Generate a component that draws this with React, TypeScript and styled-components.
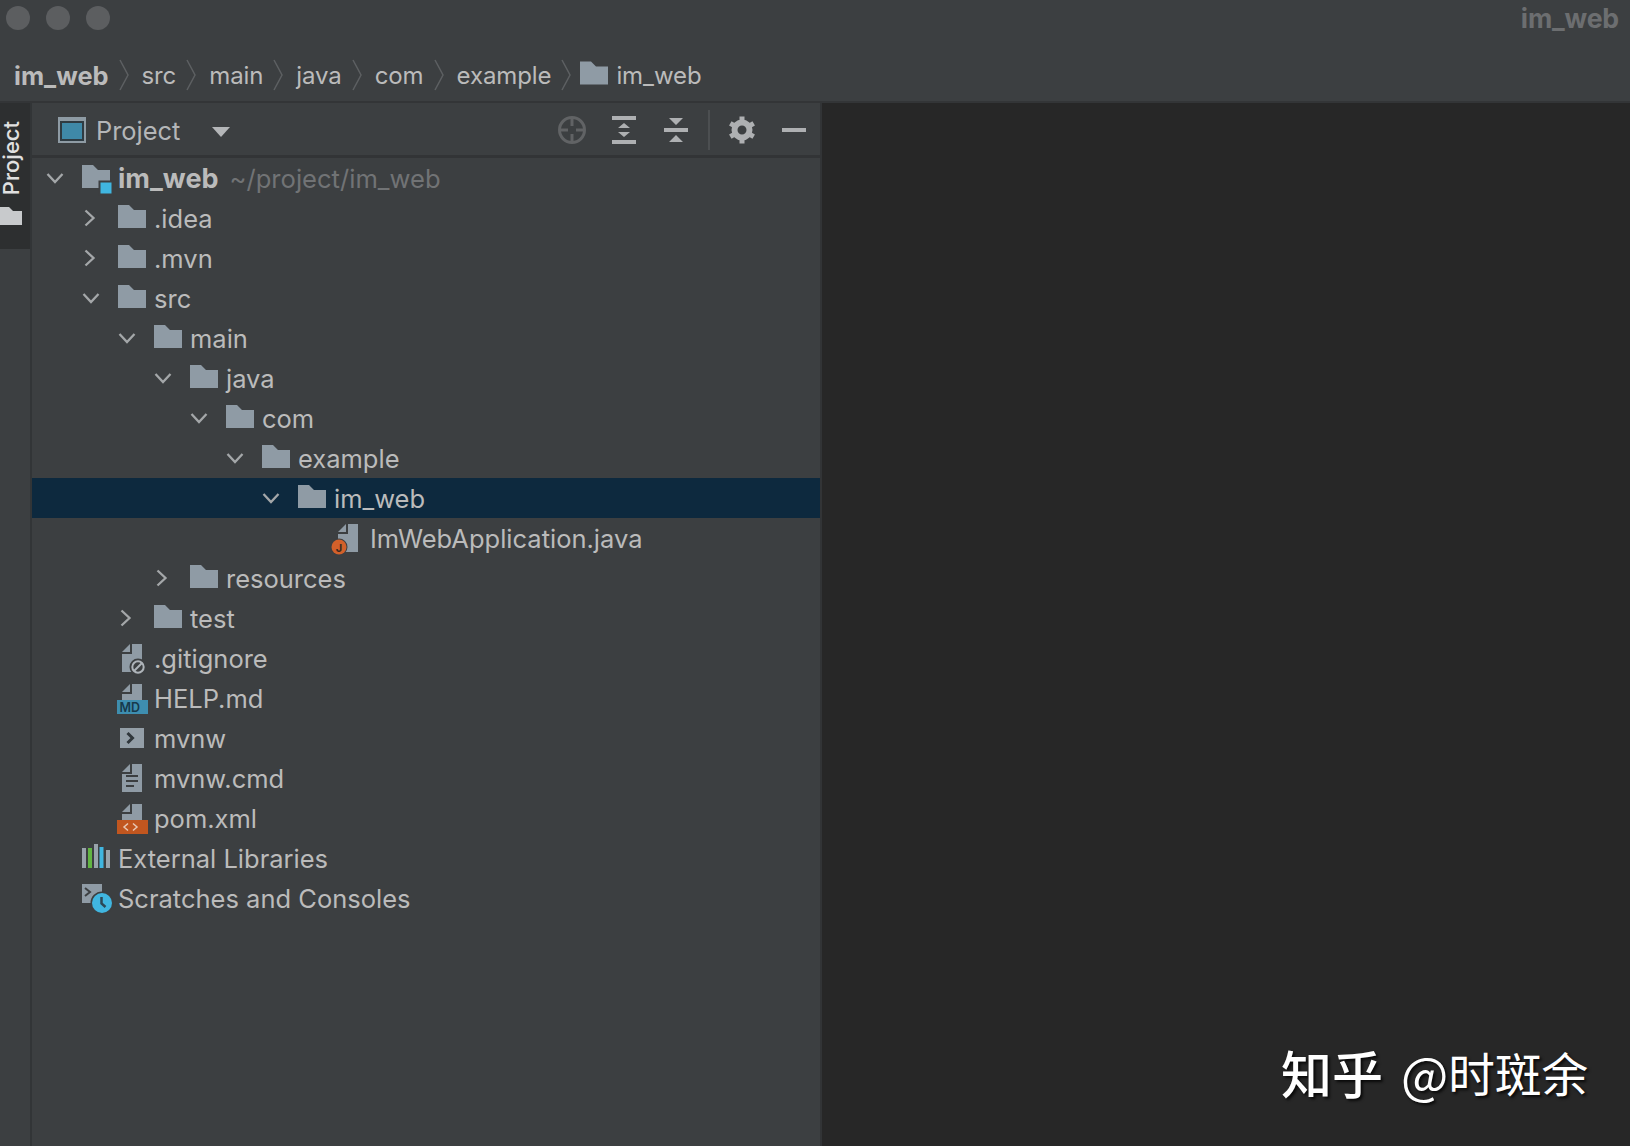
import React from "react";
import styled, { createGlobalStyle } from "styled-components";

const Global = createGlobalStyle`
  html, body { margin: 0; padding: 0; background: #272727; }
  body { font-family: Inter, "Liberation Sans", sans-serif; }
  #root { width: 1630px; height: 1146px; overflow: hidden; }
`;

const Win = styled.div`
  position: relative;
  width: 1630px;
  height: 1146px;
  display: flex;
  flex-direction: column;
  overflow: hidden;
  background: #272727;
  color: #bbbbbb;
`;
const Header = styled.header`
  height: 101px;
  flex: none;
  background: #3c3f41;
  border-bottom: 2px solid #333537;
  display: flex;
  flex-direction: column;
`;
const TitleRow = styled.div`
  height: 36px;
  display: flex;
  align-items: center;
  justify-content: space-between;
  padding: 0 11px 0 6px;
`;
const Lights = styled.div`
  display: flex;
  gap: 16px;
`;
const Light = styled.span`
  width: 24px;
  height: 24px;
  border-radius: 50%;
  background: #5c5e60;
`;
const WinTitle = styled.div`
  font-size: 26.7px;
  font-weight: 700;
  color: #6c6e70;
  letter-spacing: -0.2px;
`;
const Crumbs = styled.nav`
  flex: 1;
  display: flex;
  align-items: center;
  padding: 13px 0 0 14px;
  font-size: 24px;
  letter-spacing: -0.1px;
  color: #bbbbbb;
`;
const Crumb = styled.span`
  font-weight: 400;
`;
const RootCrumb = styled.span`
  font-size: 25.4px;
  font-weight: 700;
  letter-spacing: 0;
`;
const Sep = styled.svg`
  width: 11px;
  height: 32px;
  margin: 0 12px 0 10px;
  flex: none;
`;
const CrumbFolder = styled.svg`
  width: 28px;
  height: 24px;
  margin: -5px 8px 0 -4px;
  flex: none;
`;
const Body = styled.div`
  flex: 1;
  display: flex;
  min-height: 0;
`;
const Stripe = styled.aside`
  width: 30px;
  flex: none;
  background: #3c3f41;
  border-right: 2px solid #323537;
`;
const StripeBtn = styled.div`
  height: 146px;
  background: #2d2f30;
  display: flex;
  flex-direction: column;
  align-items: flex-start;
`;
const StripeLabel = styled.div`
  writing-mode: vertical-rl;
  transform: rotate(180deg);
  font-size: 22px;
  font-weight: 500;
  line-height: 20px;
  width: 20px;
  margin: 18px 0 0 1px;
  color: #e0e0e0;
`;
const StripeFolder = styled.svg`
  width: 22px;
  height: 18px;
  margin-top: 12px;
  display: block;
`;
const Panel = styled.section`
  width: 788px;
  flex: none;
  background: #3c3f41;
  border-right: 2px solid #323436;
  display: flex;
  flex-direction: column;
`;
const ToolBar = styled.div`
  height: 50px;
  flex: none;
  border-bottom: 3px solid #323436;
  display: flex;
  align-items: center;
  padding: 2px 0 0 25px;
`;
const ProjectGlyph = styled.svg`
  width: 30px;
  height: 28px;
  flex: none;
`;
const ToolLabel = styled.span`
  font-size: 25.4px;
  margin-left: 9px;
  color: #b4b6b8;
`;
const Drop = styled.svg`
  width: 18px;
  height: 10px;
  margin-left: 32px;
  margin-top: 3px;
`;
const ToolIcons = styled.div`
  margin-left: auto;
  display: flex;
  align-items: center;
  height: 100%;
  padding-right: 11px;
`;
const ToolIcon = styled.svg<{ $m?: number }>`
  width: 30px;
  height: 30px;
  margin-left: ${(p) => p.$m ?? 22}px;
  display: block;
`;
const ToolSep = styled.span`
  width: 2px;
  height: 40px;
  background: #4c4f51;
  margin: 0 17px 0 17px;
`;
const Tree = styled.div``;
const Row = styled.div<{ $depth: number; $sel?: boolean }>`
  height: 40px;
  display: flex;
  align-items: center;
  padding-left: ${(p) => 9 + p.$depth * 36}px;
  background: ${(p) => (p.$sel ? "#0d293e" : "transparent")};
`;
const Chev = styled.svg`
  width: 28px;
  height: 28px;
  flex: none;
  margin-right: 13px;
`;
const Blank = styled.span`
  width: 28px;
  flex: none;
  margin-right: 13px;
`;
const IconSlot = styled.svg`
  width: 32px;
  height: 36px;
  flex: none;
  margin-right: 4px;
  overflow: visible;
`;
const Name = styled.span<{ $bold?: boolean }>`
  font-size: ${(p) => (p.$bold ? 27 : 25.5)}px;
  font-weight: ${(p) => (p.$bold ? 700 : 400)};
  color: #bbbbbb;
  white-space: nowrap;
`;
const Hint = styled.span`
  font-size: 25.6px;
  color: #717375;
  margin-left: 11px;
  white-space: nowrap;
`;
const Editor = styled.main`
  flex: 1;
  background: #272727;
`;
const Mark = styled.div`
  position: absolute;
  left: 1281px;
  top: 1040px;
  display: flex;
  align-items: center;
  font-family: "Noto Sans CJK SC", sans-serif;
  font-size: 46.6px;
  line-height: 64px;
  color: #fff;
  white-space: pre;
  text-shadow: 2px 2px 3px rgba(0, 0, 0, 0.8);
`;
const MarkBrand = styled.span`
  font-size: 51px;
  font-weight: 500;
  margin-right: 18px;
`;
const MarkAt = styled.span`
  font-size: 50px;
`;

const FolderShape = ({ y = 0 }: { y?: number }) => (
  <path transform={`translate(0 ${y})`} d="M0 0h11l5 5h12v18H0z" fill="#8f9ba5" />
);
const Page = () => (
  <>
    <path d="M4 12L12 4V12z" fill="#8f9ba5" />
    <path d="M14 4h10v28H4V14h10z" fill="#8f9ba5" />
  </>
);
const ShortPage = () => (
  <>
    <path d="M4 12L12 4V12z" fill="#8f9ba5" />
    <path d="M14 4h10v16H4V14h10z" fill="#8f9ba5" />
  </>
);

type Kind = "folder" | "root" | "java" | "ignore" | "md" | "term" | "cmd" | "xml" | "libs" | "scratch";

const FileIcon = ({ kind }: { kind: Kind }) => {
  const body = () => {
    switch (kind) {
      case "folder":
        return <FolderShape y={5} />;
      case "root":
        return (
          <>
            <FolderShape y={5} />
            <rect x="16.500" y="20.500" width="15" height="15" fill="#3c3f41" />
            <rect x="18.500" y="22.500" width="11" height="11" fill="#40b6e0" />
          </>
        );
      case "java":
        return (
          <>
            <Page />
            <circle cx="5" cy="27" r="8.500" fill="#3c3f41" />
            <circle cx="5" cy="27" r="7.500" fill="#d2602a" />
            <text x="5" y="31.500" fontSize="11" fontWeight="700" textAnchor="middle" fontFamily="Inter, sans-serif" fill="#3c2a20">J</text>
          </>
        );
      case "ignore":
        return (
          <>
            <Page />
            <circle cx="20" cy="27" r="8.500" fill="#3c3f41" />
            <circle cx="20" cy="27" r="5.700" fill="none" stroke="#aeb4b9" strokeWidth="2" />
            <path d="M16 31L24 23" stroke="#aeb4b9" strokeWidth="2" />
          </>
        );
      case "md":
        return (
          <>
            <ShortPage />
            <rect x="-1" y="20" width="31" height="14" fill="#3e8eb0" />
            <text x="1.500" y="32" fontSize="12.500" fontWeight="600" fontFamily="Inter, sans-serif" fill="#17394c">MD</text>
          </>
        );
      case "term":
        return (
          <>
            <rect x="2" y="8" width="24" height="20" fill="#949fa8" />
            <path d="M9.500 13l5 5-5 5" fill="none" stroke="#30373c" strokeWidth="3" />
          </>
        );
      case "cmd":
        return (
          <>
            <Page />
            <path d="M8 16h12M8 21h12M8 26h8" stroke="#3c3f41" strokeWidth="2" />
          </>
        );
      case "xml":
        return (
          <>
            <ShortPage />
            <rect x="-1" y="20" width="31" height="14" fill="#c1561f" />
            <path d="M10 23.500l-4 3.500 4 3.500M15 23.500l4 3.500-4 3.500" fill="none" stroke="#e8c8b4" strokeWidth="1.500" />
          </>
        );
      case "libs":
        return (
          <>
            <rect x="0" y="8" width="4" height="20" fill="#99a3ab" />
            <rect x="6" y="8" width="4" height="20" fill="#62b543" />
            <rect x="12" y="4" width="4" height="24" fill="#99a3ab" />
            <rect x="17.500" y="7" width="4" height="21" fill="#40b6e0" />
            <rect x="24" y="10" width="4" height="18" fill="#99a3ab" />
          </>
        );
      case "scratch":
        return (
          <>
            <rect x="0" y="4" width="20" height="19" fill="#8f9ba5" />
            <path d="M3 8l5 4-5 4" fill="none" stroke="#3c3f41" strokeWidth="2" />
            <circle cx="20" cy="23" r="11.500" fill="#3c3f41" />
            <circle cx="20" cy="23" r="10" fill="#40b6e0" />
            <path d="M19.500 17v6.500l4 3.500" fill="none" stroke="#2c4756" strokeWidth="2.500" />
          </>
        );
    }
  };
  return <IconSlot viewBox="0 0 32 36" aria-hidden>{body()}</IconSlot>;
};

const Chevron = ({ open }: { open: boolean }) => (
  <Chev viewBox="0 0 28 28" aria-hidden>
    <path
      d={open ? "M6.500 10l7.500 8 7.500-8" : "M8.500 6.500l8 7.500-8 7.500"}
      fill="none"
      stroke="#a4a7a9"
      strokeWidth="2.300"
    />
  </Chev>
);

type Item = { d: number; name: string; kind: Kind; open?: boolean; sel?: boolean; bold?: boolean; hint?: string };
const items: Item[] = [
  { d: 0, name: "im_web", kind: "root", open: true, bold: true, hint: "~/project/im_web" },
  { d: 1, name: ".idea", kind: "folder", open: false },
  { d: 1, name: ".mvn", kind: "folder", open: false },
  { d: 1, name: "src", kind: "folder", open: true },
  { d: 2, name: "main", kind: "folder", open: true },
  { d: 3, name: "java", kind: "folder", open: true },
  { d: 4, name: "com", kind: "folder", open: true },
  { d: 5, name: "example", kind: "folder", open: true },
  { d: 6, name: "im_web", kind: "folder", open: true, sel: true },
  { d: 7, name: "ImWebApplication.java", kind: "java" },
  { d: 3, name: "resources", kind: "folder", open: false },
  { d: 2, name: "test", kind: "folder", open: false },
  { d: 1, name: ".gitignore", kind: "ignore" },
  { d: 1, name: "HELP.md", kind: "md" },
  { d: 1, name: "mvnw", kind: "term" },
  { d: 1, name: "mvnw.cmd", kind: "cmd" },
  { d: 1, name: "pom.xml", kind: "xml" },
  { d: 0, name: "External Libraries", kind: "libs" },
  { d: 0, name: "Scratches and Consoles", kind: "scratch" },
];

const crumbs = ["src", "main", "java", "com", "example"];
const CrumbSep = () => (
  <Sep viewBox="0 0 11 32" aria-hidden>
    <path d="M1 1l8 15-8 15" fill="none" stroke="#5d6062" strokeWidth="1.500" />
  </Sep>
);

export default function App() {
  return (
    <Win>
      <Global />
      <Header>
        <TitleRow>
          <Lights>
            <Light />
            <Light />
            <Light />
          </Lights>
          <WinTitle>im_web</WinTitle>
        </TitleRow>
        <Crumbs>
          <RootCrumb>im_web</RootCrumb>
          <CrumbSep />
          {crumbs.map((c) => (
            <React.Fragment key={c}>
              <Crumb>{c}</Crumb>
              <CrumbSep />
            </React.Fragment>
          ))}
          <CrumbFolder viewBox="0 0 28 23" aria-hidden>
            <FolderShape />
          </CrumbFolder>
          <Crumb>im_web</Crumb>
        </Crumbs>
      </Header>
      <Body>
        <Stripe>
          <StripeBtn>
            <StripeLabel>Project</StripeLabel>
            <StripeFolder viewBox="0 0 22 18" aria-hidden>
              <path d="M0 0h9l4 4h9v14H0z" fill="#c8cacc" />
            </StripeFolder>
          </StripeBtn>
        </Stripe>
        <Panel>
          <ToolBar>
            <ProjectGlyph viewBox="0 0 30 28" aria-hidden>
              <rect x="1" y="1" width="28" height="26" fill="#8e9ba4" />
              <rect x="3" y="5" width="24" height="20" fill="#2f3b42" />
              <rect x="5" y="7" width="20" height="16" fill="#3f89a8" />
            </ProjectGlyph>
            <ToolLabel>Project</ToolLabel>
            <Drop viewBox="0 0 18 10" aria-hidden>
              <path d="M0 0h18l-9 10z" fill="#b4b6b8" />
            </Drop>
            <ToolIcons>
              <ToolIcon viewBox="0 0 30 30" aria-hidden>
                <circle cx="15" cy="15" r="12.500" fill="none" stroke="#616365" strokeWidth="3" />
                <path d="M15 4v7M15 19v7M4 15h7M19 15h7" stroke="#616365" strokeWidth="3" />
              </ToolIcon>
              <ToolIcon viewBox="0 0 30 30" aria-hidden>
                <path d="M3 1h24v4H3zM3 25h24v4H3z" fill="#aeb0b2" />
                <path d="M15 8l6 5H9zM15 22l6-5H9z" fill="#aeb0b2" />
              </ToolIcon>
              <ToolIcon viewBox="0 0 30 30" aria-hidden>
                <path d="M3 13h24v4H3z" fill="#aeb0b2" />
                <path d="M8 3h14l-7 7zM8 27h14l-7-7z" fill="#aeb0b2" />
              </ToolIcon>
              <ToolSep />
              <ToolIcon $m={0} viewBox="0 0 30 30" aria-hidden>
                <circle cx="15" cy="15" r="7.500" fill="none" stroke="#aeb0b2" strokeWidth="6" />
                <path
                  d="M15 1.500v6M15 22.500v6M3.300 8.300l5.200 3M21.500 18.700l5.200 3M3.300 21.700l5.200-3M21.500 11.300l5.200-3"
                  stroke="#aeb0b2"
                  strokeWidth="5"
                />
              </ToolIcon>
              <ToolIcon $m={22} viewBox="0 0 30 30" aria-hidden>
                <path d="M3 13h24v4H3z" fill="#aeb0b2" />
              </ToolIcon>
            </ToolIcons>
          </ToolBar>
          <Tree>
            {items.map((it, i) => (
              <Row key={i} $depth={it.d} $sel={it.sel}>
                {it.open === undefined ? <Blank /> : <Chevron open={it.open} />}
                <FileIcon kind={it.kind} />
                <Name $bold={it.bold}>{it.name}</Name>
                {it.hint && <Hint>{it.hint}</Hint>}
              </Row>
            ))}
          </Tree>
        </Panel>
        <Editor />
      </Body>
      <Mark>
        <MarkBrand>知乎</MarkBrand>
        <MarkAt>@</MarkAt>时斑余
      </Mark>
    </Win>
  );
}
